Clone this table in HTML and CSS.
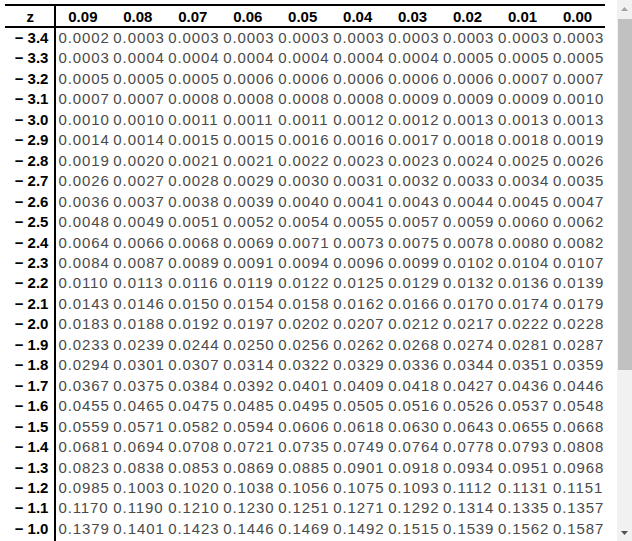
FILE: index.html
```html
<!DOCTYPE html>
<html>
<head>
<meta charset="utf-8">
<link rel="stylesheet" href="styles.css">
</head>
<body>
<div class="frame">
<div class="pane">
<table class="ztable">
<thead>
<tr><th class="zhead">z</th><th>0.09</th><th>0.08</th><th>0.07</th><th>0.06</th><th>0.05</th><th>0.04</th><th>0.03</th><th>0.02</th><th>0.01</th><th>0.00</th></tr>
</thead>
<tbody>
<tr><th class="label">− 3.4</th><td>0.0002</td><td>0.0003</td><td>0.0003</td><td>0.0003</td><td>0.0003</td><td>0.0003</td><td>0.0003</td><td>0.0003</td><td>0.0003</td><td>0.0003</td></tr>
<tr><th class="label">− 3.3</th><td>0.0003</td><td>0.0004</td><td>0.0004</td><td>0.0004</td><td>0.0004</td><td>0.0004</td><td>0.0004</td><td>0.0005</td><td>0.0005</td><td>0.0005</td></tr>
<tr><th class="label">− 3.2</th><td>0.0005</td><td>0.0005</td><td>0.0005</td><td>0.0006</td><td>0.0006</td><td>0.0006</td><td>0.0006</td><td>0.0006</td><td>0.0007</td><td>0.0007</td></tr>
<tr><th class="label">− 3.1</th><td>0.0007</td><td>0.0007</td><td>0.0008</td><td>0.0008</td><td>0.0008</td><td>0.0008</td><td>0.0009</td><td>0.0009</td><td>0.0009</td><td>0.0010</td></tr>
<tr><th class="label">− 3.0</th><td>0.0010</td><td>0.0010</td><td>0.0011</td><td>0.0011</td><td>0.0011</td><td>0.0012</td><td>0.0012</td><td>0.0013</td><td>0.0013</td><td>0.0013</td></tr>
<tr><th class="label">− 2.9</th><td>0.0014</td><td>0.0014</td><td>0.0015</td><td>0.0015</td><td>0.0016</td><td>0.0016</td><td>0.0017</td><td>0.0018</td><td>0.0018</td><td>0.0019</td></tr>
<tr><th class="label">− 2.8</th><td>0.0019</td><td>0.0020</td><td>0.0021</td><td>0.0021</td><td>0.0022</td><td>0.0023</td><td>0.0023</td><td>0.0024</td><td>0.0025</td><td>0.0026</td></tr>
<tr><th class="label">− 2.7</th><td>0.0026</td><td>0.0027</td><td>0.0028</td><td>0.0029</td><td>0.0030</td><td>0.0031</td><td>0.0032</td><td>0.0033</td><td>0.0034</td><td>0.0035</td></tr>
<tr><th class="label">− 2.6</th><td>0.0036</td><td>0.0037</td><td>0.0038</td><td>0.0039</td><td>0.0040</td><td>0.0041</td><td>0.0043</td><td>0.0044</td><td>0.0045</td><td>0.0047</td></tr>
<tr><th class="label">− 2.5</th><td>0.0048</td><td>0.0049</td><td>0.0051</td><td>0.0052</td><td>0.0054</td><td>0.0055</td><td>0.0057</td><td>0.0059</td><td>0.0060</td><td>0.0062</td></tr>
<tr><th class="label">− 2.4</th><td>0.0064</td><td>0.0066</td><td>0.0068</td><td>0.0069</td><td>0.0071</td><td>0.0073</td><td>0.0075</td><td>0.0078</td><td>0.0080</td><td>0.0082</td></tr>
<tr><th class="label">− 2.3</th><td>0.0084</td><td>0.0087</td><td>0.0089</td><td>0.0091</td><td>0.0094</td><td>0.0096</td><td>0.0099</td><td>0.0102</td><td>0.0104</td><td>0.0107</td></tr>
<tr><th class="label">− 2.2</th><td>0.0110</td><td>0.0113</td><td>0.0116</td><td>0.0119</td><td>0.0122</td><td>0.0125</td><td>0.0129</td><td>0.0132</td><td>0.0136</td><td>0.0139</td></tr>
<tr><th class="label">− 2.1</th><td>0.0143</td><td>0.0146</td><td>0.0150</td><td>0.0154</td><td>0.0158</td><td>0.0162</td><td>0.0166</td><td>0.0170</td><td>0.0174</td><td>0.0179</td></tr>
<tr><th class="label">− 2.0</th><td>0.0183</td><td>0.0188</td><td>0.0192</td><td>0.0197</td><td>0.0202</td><td>0.0207</td><td>0.0212</td><td>0.0217</td><td>0.0222</td><td>0.0228</td></tr>
<tr><th class="label">− 1.9</th><td>0.0233</td><td>0.0239</td><td>0.0244</td><td>0.0250</td><td>0.0256</td><td>0.0262</td><td>0.0268</td><td>0.0274</td><td>0.0281</td><td>0.0287</td></tr>
<tr><th class="label">− 1.8</th><td>0.0294</td><td>0.0301</td><td>0.0307</td><td>0.0314</td><td>0.0322</td><td>0.0329</td><td>0.0336</td><td>0.0344</td><td>0.0351</td><td>0.0359</td></tr>
<tr><th class="label">− 1.7</th><td>0.0367</td><td>0.0375</td><td>0.0384</td><td>0.0392</td><td>0.0401</td><td>0.0409</td><td>0.0418</td><td>0.0427</td><td>0.0436</td><td>0.0446</td></tr>
<tr><th class="label">− 1.6</th><td>0.0455</td><td>0.0465</td><td>0.0475</td><td>0.0485</td><td>0.0495</td><td>0.0505</td><td>0.0516</td><td>0.0526</td><td>0.0537</td><td>0.0548</td></tr>
<tr><th class="label">− 1.5</th><td>0.0559</td><td>0.0571</td><td>0.0582</td><td>0.0594</td><td>0.0606</td><td>0.0618</td><td>0.0630</td><td>0.0643</td><td>0.0655</td><td>0.0668</td></tr>
<tr><th class="label">− 1.4</th><td>0.0681</td><td>0.0694</td><td>0.0708</td><td>0.0721</td><td>0.0735</td><td>0.0749</td><td>0.0764</td><td>0.0778</td><td>0.0793</td><td>0.0808</td></tr>
<tr><th class="label">− 1.3</th><td>0.0823</td><td>0.0838</td><td>0.0853</td><td>0.0869</td><td>0.0885</td><td>0.0901</td><td>0.0918</td><td>0.0934</td><td>0.0951</td><td>0.0968</td></tr>
<tr><th class="label">− 1.2</th><td>0.0985</td><td>0.1003</td><td>0.1020</td><td>0.1038</td><td>0.1056</td><td>0.1075</td><td>0.1093</td><td>0.1112</td><td>0.1131</td><td>0.1151</td></tr>
<tr><th class="label">− 1.1</th><td>0.1170</td><td>0.1190</td><td>0.1210</td><td>0.1230</td><td>0.1251</td><td>0.1271</td><td>0.1292</td><td>0.1314</td><td>0.1335</td><td>0.1357</td></tr>
<tr><th class="label">− 1.0</th><td>0.1379</td><td>0.1401</td><td>0.1423</td><td>0.1446</td><td>0.1469</td><td>0.1492</td><td>0.1515</td><td>0.1539</td><td>0.1562</td><td>0.1587</td></tr>
<tr><th class="label">− 0.9</th><td>0.1611</td><td>0.1635</td><td>0.1660</td><td>0.1685</td><td>0.1711</td><td>0.1736</td><td>0.1762</td><td>0.1788</td><td>0.1814</td><td>0.1841</td></tr>
<tr><th class="label">− 0.8</th><td>0.1867</td><td>0.1894</td><td>0.1922</td><td>0.1949</td><td>0.1977</td><td>0.2005</td><td>0.2033</td><td>0.2061</td><td>0.2090</td><td>0.2119</td></tr>
<tr><th class="label">− 0.7</th><td>0.2148</td><td>0.2177</td><td>0.2206</td><td>0.2236</td><td>0.2266</td><td>0.2296</td><td>0.2327</td><td>0.2358</td><td>0.2389</td><td>0.2420</td></tr>
<tr><th class="label">− 0.6</th><td>0.2451</td><td>0.2483</td><td>0.2514</td><td>0.2546</td><td>0.2578</td><td>0.2611</td><td>0.2643</td><td>0.2676</td><td>0.2709</td><td>0.2743</td></tr>
<tr><th class="label">− 0.5</th><td>0.2776</td><td>0.2810</td><td>0.2843</td><td>0.2877</td><td>0.2912</td><td>0.2946</td><td>0.2981</td><td>0.3015</td><td>0.3050</td><td>0.3085</td></tr>
<tr><th class="label">− 0.4</th><td>0.3121</td><td>0.3156</td><td>0.3192</td><td>0.3228</td><td>0.3264</td><td>0.3300</td><td>0.3336</td><td>0.3372</td><td>0.3409</td><td>0.3446</td></tr>
<tr><th class="label">− 0.3</th><td>0.3483</td><td>0.3520</td><td>0.3557</td><td>0.3594</td><td>0.3632</td><td>0.3669</td><td>0.3707</td><td>0.3745</td><td>0.3783</td><td>0.3821</td></tr>
<tr><th class="label">− 0.2</th><td>0.3859</td><td>0.3897</td><td>0.3936</td><td>0.3974</td><td>0.4013</td><td>0.4052</td><td>0.4090</td><td>0.4129</td><td>0.4168</td><td>0.4207</td></tr>
<tr><th class="label">− 0.1</th><td>0.4247</td><td>0.4286</td><td>0.4325</td><td>0.4364</td><td>0.4404</td><td>0.4443</td><td>0.4483</td><td>0.4522</td><td>0.4562</td><td>0.4602</td></tr>
<tr><th class="label">− 0.0</th><td>0.4641</td><td>0.4681</td><td>0.4721</td><td>0.4761</td><td>0.4801</td><td>0.4840</td><td>0.4880</td><td>0.4920</td><td>0.4960</td><td>0.5000</td></tr>
</tbody>
</table>
</div>
<div class="scrollbar" aria-hidden="true">
<div class="sb-btn"><svg width="7" height="4" viewBox="0 0 7 4"><path d="M0 4 L3.5 0 L7 4 Z" fill="#a3a3a3"/></svg></div>
<div class="sb-thumb"></div>
<div class="sb-track"></div>
<div class="sb-btn"><svg width="7" height="4" viewBox="0 0 7 4"><path d="M0 0 L3.5 4 L7 0 Z" fill="#505050"/></svg></div>
</div>
</div>
</body>
</html>
```

FILE: styles.css
```css
html, body {
  margin: 0;
  padding: 0;
  background: #fff;
}

body {
  font-family: "Liberation Sans", Arial, sans-serif;
}

.frame {
  display: flex;
  height: 541px;
  overflow: hidden;
}

.pane {
  flex: 1;
  overflow: hidden;
  padding: 4px 0 0 5px;
}

.ztable {
  border-collapse: separate;
  border-spacing: 0;
  font-size: 15px;
  width: 600px;
  background-image: linear-gradient(#000, #000);
  background-repeat: no-repeat;
  background-position: 49px 0;
  background-size: 2px 100%;
}

.ztable th,
.ztable td {
  box-sizing: border-box;
}

.ztable thead th {
  font-weight: bold;
  color: #000;
  text-align: center;
  border-top: 2px solid #000;
  border-bottom: 2px solid #000;
  padding: 2px 0 0 0;
  line-height: 18px;
  width: 55px;
}

.ztable thead th.zhead {
  width: 51px;
}

.ztable .label {
  text-align: right;
  font-weight: bold;
  color: #000;
  padding: 1px 7px 1px 0;
  line-height: 18.46px;
  white-space: nowrap;
}

.ztable td {
  color: #4a4a4a;
  padding: 1px 0 1px 3px;
  line-height: 18.46px;
  letter-spacing: 0.9px;
  text-align: left;
  white-space: nowrap;
}

.scrollbar {
  width: 15px;
  flex: none;
  display: flex;
  flex-direction: column;
  background: #f1f1f1;
}

.sb-btn {
  height: 17px;
  flex: none;
  display: flex;
  align-items: center;
  justify-content: center;
}

.sb-thumb {
  height: 351px;
  flex: none;
  margin: 2px 0 0 1px;
  background: #c1c1c1;
}

.sb-track {
  flex: 1;
}
```
